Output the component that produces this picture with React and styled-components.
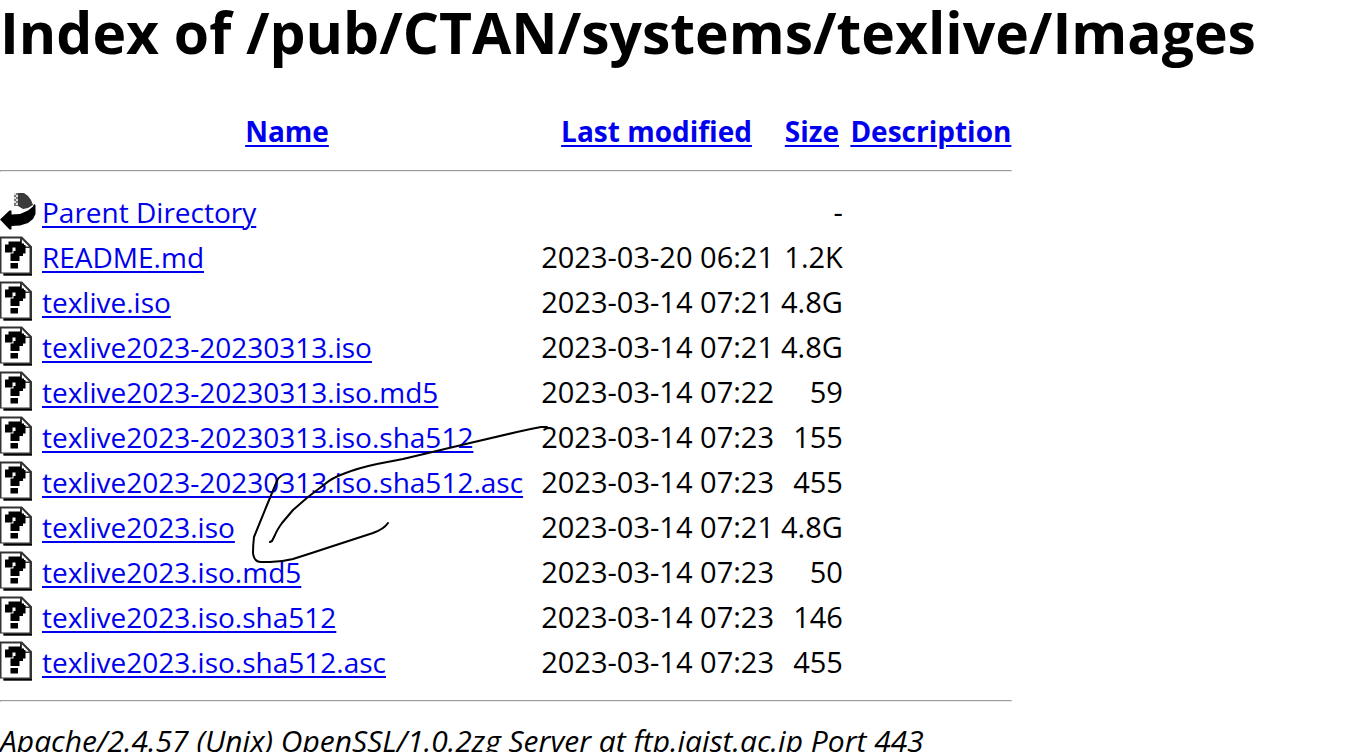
import React from 'react';
import styled, { createGlobalStyle } from 'styled-components';

const GlobalStyle = createGlobalStyle`
body {
  margin: 0;
  background: white;
  color: black;
  font-family: "Open Sans", "Noto Sans", sans-serif;
  font-size: 29px;
  line-height: 44px;
  overflow: hidden;
}`;

const Page = styled.main`
position: relative;
`;

const Title = styled.h1`
margin: 0 0 44px;
font-size: 57px;
line-height: 64px;
white-space: nowrap;
`;

const Table = styled.table`
border-collapse: collapse;
white-space: nowrap;
`;

const Col = styled.col`
width: ${props => props.$width}px;
`;

const Th = styled.th`
height: 46px;
padding: 0 ${props => props.$gap || 0}px 0 0;
`;

const Td = styled.td`
height: 45px;
padding: 0 ${props => props.$gap || 0}px 0 0;
text-align: ${props => props.$align || 'left'};
`;

const RuleCell = styled.td`
padding: 0;
`;

const Rule = styled.hr`
margin: 16px 0 17px;
`;

const Link = styled.a`
color: #0000ee;
font-size: 28px;
text-decoration: underline;
text-decoration-thickness: 2px;
text-underline-offset: 3px;
`;

const Icon = styled.svg`
display: block;
width: 36px;
height: 42px;
`;

const Address = styled.address`
font-size: 30px;
white-space: nowrap;
`;

const Scribble = styled.svg`
position: absolute;
top: 420px;
left: 245px;
width: 310px;
height: 150px;
pointer-events: none;
`;

const files = [
  { name: 'README.md', modified: '2023-03-20 06:21', size: '1.2K' },
  { name: 'texlive.iso', modified: '2023-03-14 07:21', size: '4.8G' },
  { name: 'texlive2023-20230313.iso', modified: '2023-03-14 07:21', size: '4.8G' },
  { name: 'texlive2023-20230313.iso.md5', modified: '2023-03-14 07:22', size: '59' },
  { name: 'texlive2023-20230313.iso.sha512', modified: '2023-03-14 07:23', size: '155' },
  { name: 'texlive2023-20230313.iso.sha512.asc', modified: '2023-03-14 07:23', size: '455' },
  { name: 'texlive2023.iso', modified: '2023-03-14 07:21', size: '4.8G' },
  { name: 'texlive2023.iso.md5', modified: '2023-03-14 07:23', size: '50' },
  { name: 'texlive2023.iso.sha512', modified: '2023-03-14 07:23', size: '146' },
  { name: 'texlive2023.iso.sha512.asc', modified: '2023-03-14 07:23', size: '455' },
];

const BackIcon = () => (
  <Icon viewBox="0 0 36 42" role="img" aria-label="[PARENTDIR]">
    <path d="M14 2H18V15H14Z" fill="#777" />
    <path d="M14 2h2v2h-2zM16 4h2v2h-2zM14 6h2v2h-2zM16 8h2v2h-2zM14 10h2v2h-2zM16 12h2v2h-2z" fill="#ddd" />
    <path d="M18 2H24L28 5L31 9L33 14L28 17L23 18L18 15Z" fill="#3a3a3a" />
    <path d="M0 28.500L9.500 19.500H11.500V23.500L20 23L28 19.500L33 15.500L34 13L35.500 14V23L33 28L28 32L20 34.500L11.500 35V38.500H9.500Z" fill="#000" />
  </Icon>
);

const UnknownIcon = () => (
  <Icon viewBox="0 0 36 42" role="img" aria-label="[   ]">
    <path d="M0 .5H22L32 10.500V39.500H3.500V37.500H0Z" fill="#333" />
    <path d="M1.500 2.500H20V12H29.500V36.500H1.500Z" fill="#fff" />
    <path d="M22 3.500L29 10.500H22Z" fill="#fff" />
    <path d="M3.500 38H32V39.500H3.500Z" fill="#000" />
    <path d="M8.500 5.500H21V7.500H24V9H25.500V17.500H23V20H19.500V25H10.500V17.500H13.500V15H15.500V11.500H12.500V16.500H5V8.500H8.500ZM10.500 27H18V32.500H10.500Z" fill="#000" />
  </Icon>
);

const FileRow = ({ file }) => (
  <tr>
    <Td><UnknownIcon /></Td>
    <Td $gap={7}><Link href={file.name}>{file.name}</Link></Td>
    <Td $gap={7} $align="right">{file.modified}</Td>
    <Td $gap={7} $align="right">{file.size}</Td>
    <Td />
  </tr>
);

const RuleRow = () => (
  <tr>
    <RuleCell colSpan={5}><Rule /></RuleCell>
  </tr>
);

export default function App() {
  return (
    <Page>
      <GlobalStyle />
      <Title>Index of /pub/CTAN/systems/texlive/Images</Title>
      <Table>
        <colgroup>
          <Col $width={42} />
          <Col $width={497} />
          <Col $width={242} />
          <Col $width={67} />
          <Col $width={162} />
        </colgroup>
        <thead>
          <tr>
            <Th />
            <Th $gap={7}><Link href="?C=N;O=D">Name</Link></Th>
            <Th $gap={7}><Link href="?C=M;O=A">Last modified</Link></Th>
            <Th $gap={7}><Link href="?C=S;O=A">Size</Link></Th>
            <Th><Link href="?C=D;O=A">Description</Link></Th>
          </tr>
        </thead>
        <tbody>
          <RuleRow />
          <tr>
            <Td><BackIcon /></Td>
            <Td $gap={7}><Link href="/pub/CTAN/systems/texlive/">Parent Directory</Link></Td>
            <Td />
            <Td $gap={7} $align="right">-</Td>
            <Td />
          </tr>
          {files.map(file => <FileRow key={file.name} file={file} />)}
          <RuleRow />
        </tbody>
      </Table>
      <Address>Apache/2.4.57 (Unix) OpenSSL/1.0.2zg Server at ftp.jaist.ac.jp Port 443</Address>
      <Scribble viewBox="245 420 310 150" fill="none" stroke="black" strokeWidth="2" strokeLinecap="round" strokeLinejoin="round" aria-hidden="true">
        <path d="M547 427L541 427Q530 429 517 432L470 443L403 459L377 464Q358 468 343 474Q332 478 325 484L308 497L293 510L282 523Q277 530 275 535L272 541L270 542" />
        <path d="M281 476Q278 478 277 481L267 505L254 537Q253 545 253 553Q254 562 261 562H270Q281 562 293 559Q312 553 330 547L373 533Q384 529 388 523" />
      </Scribble>
    </Page>
  );
}
